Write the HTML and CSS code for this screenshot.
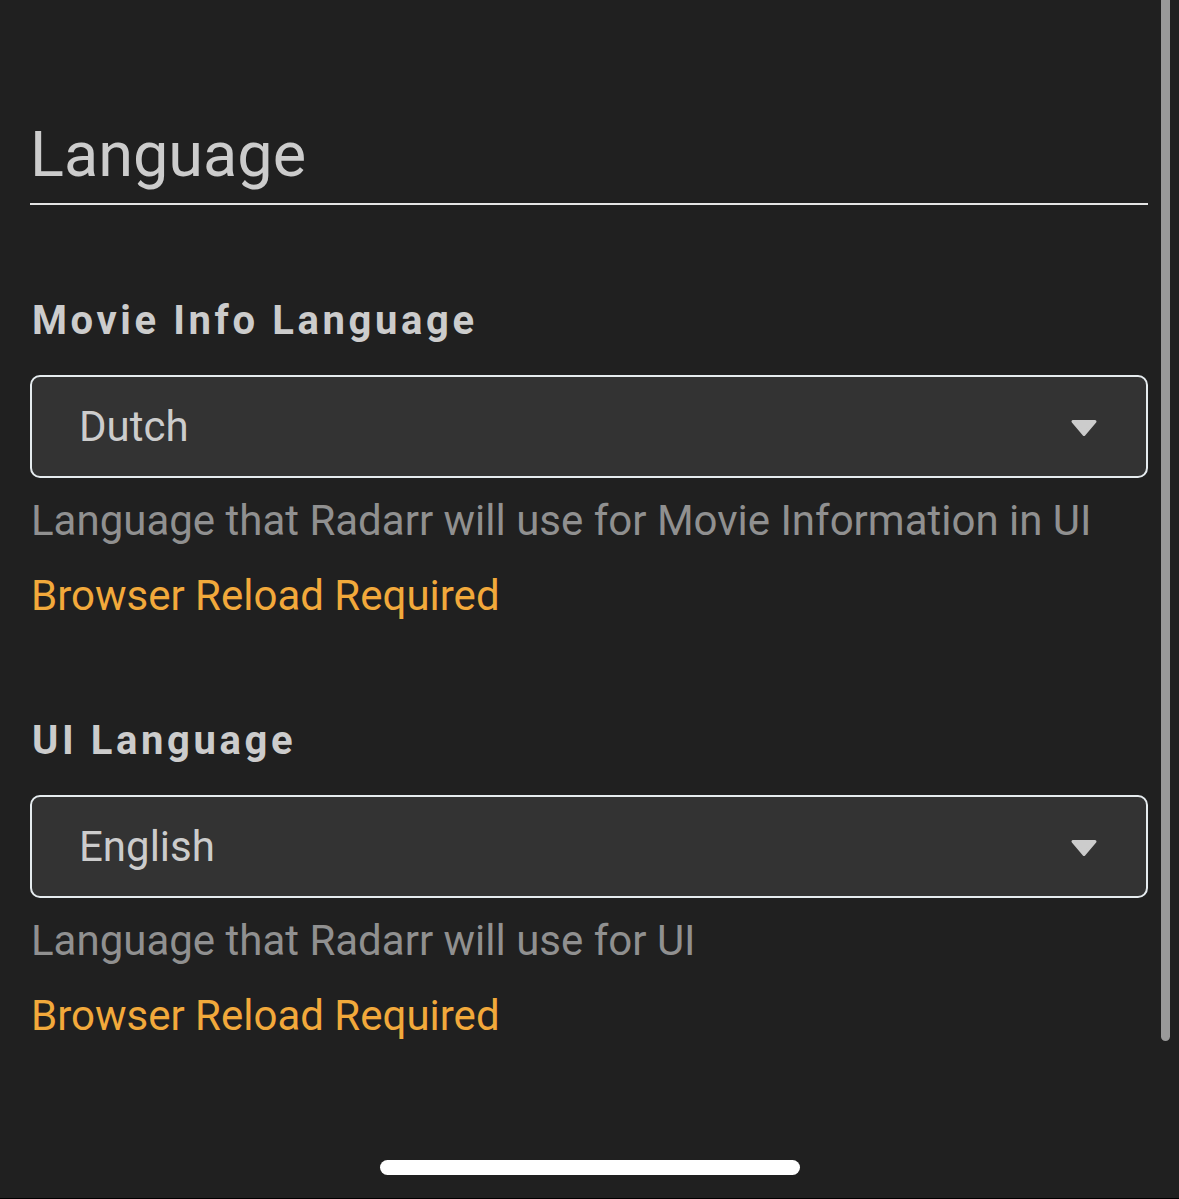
FILE: index.html
```html
<!DOCTYPE html>
<html lang="en">
<head>
<meta charset="utf-8">
<title>Language</title>
<link rel="stylesheet" href="styles.css">
</head>
<body>
<div class="screen">
  <main class="content">
    <h1 class="section-title">Language</h1>

    <div class="field">
      <div class="field-label">Movie Info Language</div>
      <div class="select">
        <span class="select-value">Dutch</span>
        <svg class="caret" width="28" height="18" viewBox="0 0 28 18"><polygon points="3,2.5 25,2.5 14,15.5" fill="#cccccc" stroke="#cccccc" stroke-width="3" stroke-linejoin="round"/></svg>
      </div>
      <div class="help">Language that Radarr will use for Movie Information in UI</div>
      <div class="warning">Browser Reload Required</div>
    </div>

    <div class="field">
      <div class="field-label">UI Language</div>
      <div class="select">
        <span class="select-value">English</span>
        <svg class="caret" width="28" height="18" viewBox="0 0 28 18"><polygon points="3,2.5 25,2.5 14,15.5" fill="#cccccc" stroke="#cccccc" stroke-width="3" stroke-linejoin="round"/></svg>
      </div>
      <div class="help">Language that Radarr will use for UI</div>
      <div class="warning">Browser Reload Required</div>
    </div>
  </main>
  <div class="scrollbar"></div>
  <div class="home-indicator"></div>
</div>
</body>
</html>
```
FILE: styles.css
```css
html {
  background: #000;
}
body {
  margin: 0;
  font-family: Roboto, "Liberation Sans", sans-serif;
}
.screen {
  position: relative;
  height: 1198px;
  background: #202020;
  overflow: hidden;
}
.content {
  padding: 117px 31px 0 30px;
}
.section-title {
  margin: 0;
  font-size: 63px;
  font-weight: 400;
  line-height: 76px;
  color: #cccccc;
  padding-bottom: 10px;
  border-bottom: 2px solid #e4e4e4;
}
.field {
  padding-top: 92px;
}
.field + .field {
  padding-top: 97px;
}
.field-label {
  font-size: 40px;
  font-weight: 700;
  line-height: 48px;
  letter-spacing: 3.6px;
  color: #cccccc;
  padding-left: 2px;
}
.select {
  margin-top: 30px;
  height: 99px;
  border: 2px solid #e6ecef;
  border-radius: 10px;
  background: #333333;
  display: flex;
  align-items: center;
  justify-content: space-between;
  padding: 0 48px 0 47px;
}
.select-value {
  font-size: 42px;
  line-height: 48px;
  color: #cccccc;
}
.caret {
  display: block;
  margin-top: 2px;
}
.help {
  margin-top: 19px;
  font-size: 42px;
  line-height: 48px;
  color: #909090;
  padding-left: 1px;
}
.warning {
  margin-top: 27px;
  font-size: 42px;
  line-height: 48px;
  color: #f2a93b;
  padding-left: 1px;
}
.scrollbar {
  position: absolute;
  top: 0;
  left: 1161px;
  width: 9px;
  height: 1041px;
  background: #999999;
  border-radius: 0 0 5px 5px;
}
.home-indicator {
  position: absolute;
  left: 380px;
  top: 1160px;
  width: 420px;
  height: 15px;
  background: #ffffff;
  border-radius: 8px;
}
```
